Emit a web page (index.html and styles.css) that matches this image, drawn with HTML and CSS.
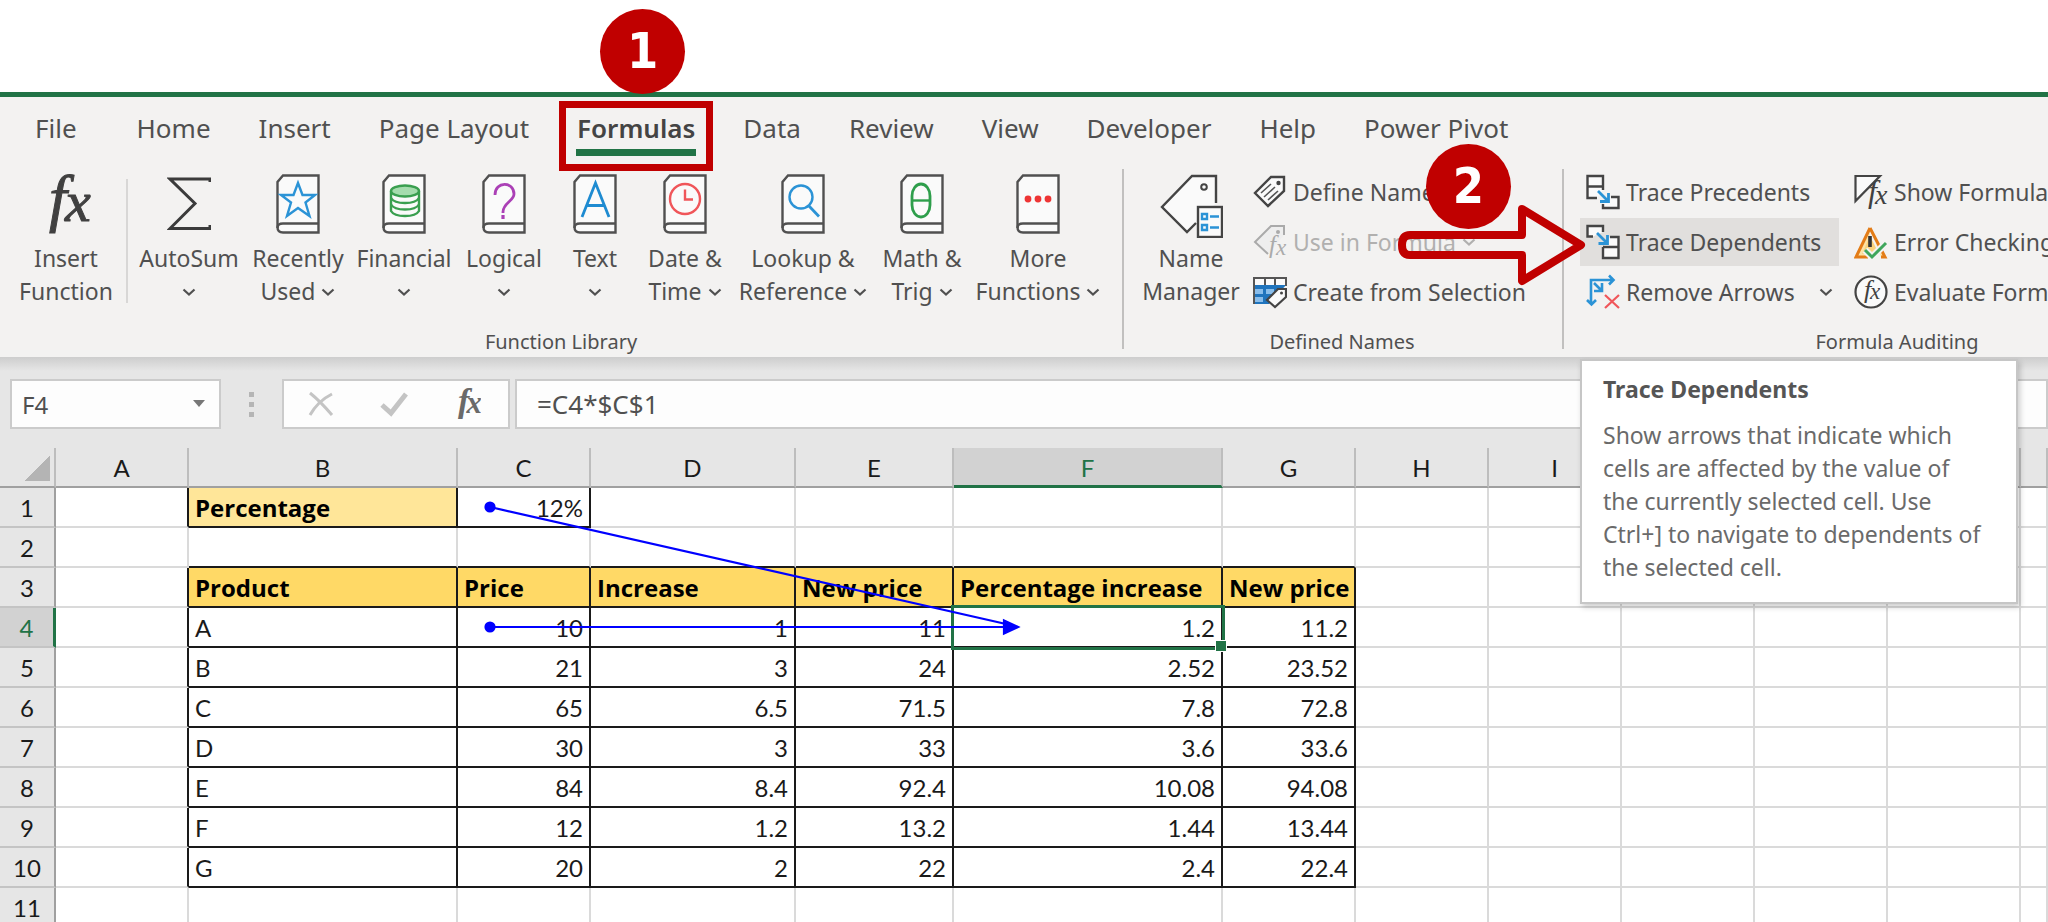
FILE: index.html
```html
<!DOCTYPE html>
<html lang="en">
<head>
    <meta charset="UTF-8">
    <meta name="viewport" content="width=device-width, initial-scale=1.0">
    <title>Trace Dependents</title>
    <link rel="stylesheet" href="styles.css">
</head>
<body>
    <!-- Shared icon shapes -->
    <svg class="defs" width="0" height="0" aria-hidden="true">
        <symbol id="book" viewBox="0 0 44 60">
            <path d="M7 1.500H42.500V58.500H7Q1.500 58.500 1.500 53V8Z" fill="#fafafa" stroke="#505050" stroke-width="2.400"/>
            <path d="M42 49.500H7Q1.500 49.500 1.500 54" fill="none" stroke="#505050" stroke-width="2.400"/>
        </symbol>
        <symbol id="chevron" viewBox="0 0 14 8">
            <path d="M1.500 1.500L7 6.500L12.500 1.500" fill="none" stroke="currentColor" stroke-width="2.200"/>
        </symbol>
        <symbol id="fx" viewBox="0 0 52 60">
            <text x="9" y="45" font-size="64">f</text>
            <text x="25" y="47" font-size="58">x</text>
        </symbol>
    </svg>

    <div class="title-space"></div>

    <!-- Ribbon -->
    <header class="ribbon">
        <nav class="tabs">
            <button class="tab file">File</button>
            <button class="tab">Home</button>
            <button class="tab">Insert</button>
            <button class="tab">Page Layout</button>
            <button class="tab active">Formulas<span class="frame"></span><span class="step step-one">1</span></button>
            <button class="tab">Data</button>
            <button class="tab">Review</button>
            <button class="tab">View</button>
            <button class="tab">Developer</button>
            <button class="tab">Help</button>
            <button class="tab">Power Pivot</button>
        </nav>

        <div class="groups">
            <section class="group library">
                <div class="tools">
                    <button class="big w-insert">
                        <svg class="fx" width="52" height="60"><use href="#fx"/></svg>
                        <span>Insert<br>Function</span>
                    </button>
                    <div class="divider"></div>
                    <button class="big w-wide">
                        <svg width="44" height="60" viewBox="0 0 44 60"><path d="M43 8V5H3L28 29.500L3 54.500H43V51" fill="none" stroke="#3b3b3b" stroke-width="3"/></svg>
                        <span>AutoSum<br><svg class="chev" width="14" height="8"><use href="#chevron"/></svg></span>
                    </button>
                    <button class="big w-recent">
                        <svg width="44" height="60" viewBox="0 0 44 60"><use href="#book"/><path d="M22 9L26.500 21H39L29.500 28.500L33.500 42L22 34L11 42L15 28.500L5 21H17.500Z" fill="none" stroke="#2b93d6" stroke-width="2.400"/></svg>
                        <span>Recently<br>Used <svg class="chev" width="14" height="8"><use href="#chevron"/></svg></span>
                    </button>
                    <button class="big w-financial">
                        <svg width="44" height="60" viewBox="0 0 44 60"><use href="#book"/><path d="M9 17V37Q12 42 23 42T37 37V17" fill="#fafafa" stroke="#3a9f50" stroke-width="2.400"/><ellipse cx="23" cy="17" rx="14" ry="5.500" fill="#a5dcae" stroke="#3a9f50" stroke-width="2.400"/><path d="M9 24Q12 29 23 29T37 24M9 30.500Q12 35.500 23 35.500T37 30.500" fill="none" stroke="#3a9f50" stroke-width="2.400"/></svg>
                        <span>Financial<br><svg class="chev" width="14" height="8"><use href="#chevron"/></svg></span>
                    </button>
                    <button class="big w-mid">
                        <svg width="44" height="60" viewBox="0 0 44 60"><use href="#book"/><path d="M13 21C13 7 32 7 32 20C32 27 21 29 21 38V39" fill="none" stroke="#ab40b6" stroke-width="2.800"/><path d="M21 41V45" stroke="#ab40b6" stroke-width="3.200"/></svg>
                        <span>Logical<br><svg class="chev" width="14" height="8"><use href="#chevron"/></svg></span>
                    </button>
                    <button class="big w-small">
                        <svg width="44" height="60" viewBox="0 0 44 60"><use href="#book"/><path d="M9 43L22.500 9L36 43M14 31.500H31" fill="none" stroke="#1e8bd1" stroke-width="2.800"/></svg>
                        <span>Text<br><svg class="chev" width="14" height="8"><use href="#chevron"/></svg></span>
                    </button>
                    <button class="big w-small">
                        <svg width="44" height="60" viewBox="0 0 44 60"><use href="#book"/><circle cx="22" cy="25" r="15" fill="none" stroke="#f0565a" stroke-width="2.400"/><path d="M22 15.500V25.500H30" fill="none" stroke="#f0565a" stroke-width="2.400"/></svg>
                        <span>Date &amp;<br>Time <svg class="chev" width="14" height="8"><use href="#chevron"/></svg></span>
                    </button>
                    <button class="big w-lookup">
                        <svg width="44" height="60" viewBox="0 0 44 60"><use href="#book"/><circle cx="20" cy="23" r="11.500" fill="none" stroke="#2b93d6" stroke-width="2.400"/><path d="M28 32L38 42.500" stroke="#2b93d6" stroke-width="2.800"/></svg>
                        <span>Lookup &amp;<br>Reference <svg class="chev" width="14" height="8"><use href="#chevron"/></svg></span>
                    </button>
                    <button class="big w-mid">
                        <svg width="44" height="60" viewBox="0 0 44 60"><use href="#book"/><rect x="12" y="10" width="18" height="33" rx="9" ry="12" fill="none" stroke="#2e9e4b" stroke-width="2.800"/><path d="M12 26.500H30" stroke="#2e9e4b" stroke-width="2.400"/></svg>
                        <span>Math &amp;<br>Trig <svg class="chev" width="14" height="8"><use href="#chevron"/></svg></span>
                    </button>
                    <button class="big w-more">
                        <svg width="44" height="60" viewBox="0 0 44 60"><use href="#book"/><g fill="#ee3535"><circle cx="12" cy="25" r="3.400"/><circle cx="22" cy="25" r="3.400"/><circle cx="32" cy="25" r="3.400"/></g></svg>
                        <span>More<br>Functions <svg class="chev" width="14" height="8"><use href="#chevron"/></svg></span>
                    </button>
                </div>
                <div class="group-name">Function Library</div>
            </section>

            <section class="group names">
                <div class="tools">
                    <button class="big w-manager">
                        <svg width="64" height="64" viewBox="0 0 64 64"><path d="M57 29V2H33L3 33L28 58L37 49" fill="#fafafa" stroke="#444" stroke-width="2.400"/><circle cx="45" cy="13" r="2.800" fill="none" stroke="#444" stroke-width="2"/><rect x="39" y="33" width="24" height="30" fill="#fafafa" stroke="#444" stroke-width="2.400"/><path d="M43 40h5v5h-5zM43 51h5v5h-5zM51 42.500h9M51 53.500h9" fill="none" stroke="#2b93d6" stroke-width="2.400"/></svg>
                        <span>Name<br>Manager</span>
                    </button>
                    <div class="stack">
                        <button class="small">
                            <svg width="34" height="34" viewBox="0 0 34 34"><path d="M18 2H31V16L15 31L2 18Z" fill="#fafafa" stroke="#444" stroke-width="2.400"/><circle cx="25.500" cy="8" r="2.200" fill="#444"/><path d="M8 18L18 9M11 22L22 12M15 25L25 16" stroke="#555" stroke-width="1.600"/></svg>
                            <span>Define Name</span>
                        </button>
                        <button class="small" disabled>
                            <svg class="fx" width="34" height="36" viewBox="0 0 34 36"><path d="M31 11V2H18L2 18L15 30" fill="#eee" stroke="#aaa" stroke-width="2"/><circle cx="25" cy="8" r="2" fill="#aaa"/><text x="16" y="29" font-size="25">f</text><text x="23" y="31" font-size="23">x</text></svg>
                            <span>Use in Formula</span>
                            <svg class="chev" width="14" height="8"><use href="#chevron"/></svg>
                        </button>
                        <button class="small">
                            <svg width="34" height="34" viewBox="0 0 34 34"><rect x="1" y="3" width="32" height="7" fill="#fafafa"/><path d="M1 10H33L16 29H1Z" fill="#1f74bd"/><path d="M2 14h8v5H2zM2 22h8v5H2zM13 14h8v5h-8z" fill="#89bdea"/><path d="M33 11V3H1V29M12 3V10M22 3V10" fill="none" stroke="#555" stroke-width="2"/><path d="M25 14H33V22L22 32L14 25Z" fill="#fafafa" stroke="#444" stroke-width="2.200"/><circle cx="28.500" cy="18" r="1.500" fill="#444"/></svg>
                            <span>Create from Selection</span>
                        </button>
                    </div>
                </div>
                <div class="group-name">Defined Names</div>
            </section>

            <section class="group auditing">
                <div class="tools">
                    <div class="stack trace">
                        <button class="small">
                            <svg width="34" height="36" viewBox="0 0 34 36"><path d="M11 24H1.500V2H17V16M1.500 12.500H17M25 23H32.500V34H17V30" fill="#fafafa" stroke="#444" stroke-width="2.400"/><path d="M12 17L22 27M14 27.500H22.500V19" fill="none" stroke="#2b93d6" stroke-width="2.800"/></svg>
                            <span>Trace Precedents</span>
                        </button>
                        <button class="small hover" aria-describedby="trace-tip">
                            <svg width="34" height="36" viewBox="0 0 34 36"><path d="M7 12.500H1.500V2H17V8" fill="#fafafa" stroke="#444" stroke-width="2.400"/><path d="M17 23V34H32.500V13H24M17 23H32.500" fill="#fafafa" stroke="#444" stroke-width="2.400"/><path d="M11 9L21 19M12.500 19.500H21.500V11" fill="none" stroke="#2b93d6" stroke-width="2.800"/></svg>
                            <span>Trace Dependents</span>
                            <svg class="pointer" width="190" height="84" viewBox="0 0 190 84"><path d="M14 32H126V6L185 42L126 78V52H14Q6 52 6 42T14 32Z" fill="none" stroke="#c00000" stroke-width="8" stroke-linejoin="round"/></svg>
                            <span class="step step-two">2</span>
                        </button>
                        <button class="small">
                            <svg width="34" height="36" viewBox="0 0 34 36"><path d="M5 30V6H27M8 9L15 16M8 17H16V9M1 26L5.500 30.500L10 26M23 1.500L27.500 6L23 10.500" fill="none" stroke="#2b93d6" stroke-width="2.600"/><path d="M19 21L33 34M33 21L19 34" stroke="#f0565a" stroke-width="2.200"/></svg>
                            <span>Remove Arrows</span>
                            <svg class="chev end" width="14" height="8"><use href="#chevron"/></svg>
                        </button>
                    </div>
                    <div class="stack">
                        <button class="small">
                            <svg class="fx" width="34" height="36" viewBox="0 0 34 36"><path d="M1.500 27V2H26Z" fill="#fafafa" stroke="#444" stroke-width="2.200"/><text x="14" y="28" font-size="32">f</text><text x="21" y="30" font-size="28">x</text></svg>
                            <span>Show Formulas</span>
                        </button>
                        <button class="small">
                            <svg width="34" height="36" viewBox="0 0 34 36"><path d="M16 4L2 33H14M27 33H31L16 4" fill="#fce3a6" stroke="#e37c17" stroke-width="3"/><path d="M16 12L8 30H25Z" fill="#fad27b"/><path d="M16 12V23" stroke="#333" stroke-width="3.600"/><path d="M11 26L18 33L32 19" fill="none" stroke="#f3f2f1" stroke-width="7"/><path d="M11 26L18 33L32 19" fill="none" stroke="#3fa65c" stroke-width="3"/></svg>
                            <span>Error Checking</span>
                            <svg class="chev" width="14" height="8"><use href="#chevron"/></svg>
                        </button>
                        <button class="small">
                            <svg class="fx" width="34" height="36" viewBox="0 0 34 36"><circle cx="17" cy="18" r="15.500" fill="#fafafa" stroke="#444" stroke-width="2.200"/><text x="10" y="24" font-size="26">f</text><text x="16" y="25" font-size="23">x</text></svg>
                            <span>Evaluate Formula</span>
                        </button>
                    </div>
                </div>
                <div class="group-name">Formula Auditing</div>
                <div class="tooltip" id="trace-tip" role="tooltip">
                    <strong>Trace Dependents</strong>
                    <p>Show arrows that indicate which cells are affected by the value of the currently selected cell. Use Ctrl+] to navigate to dependents of the selected cell.</p>
                </div>
            </section>
        </div>
    </header>

    <!-- Formula bar -->
    <div class="formula-bar">
        <div class="name-box">
            <input type="text" value="F4" aria-label="Name box">
            <button aria-label="Show names"><svg width="12" height="8" viewBox="0 0 12 8"><path d="M0 0H12L6 7Z" fill="#777"/></svg></button>
        </div>
        <div class="grip"><i></i><i></i><i></i></div>
        <div class="entry-buttons">
            <button aria-label="Cancel"><svg width="26" height="26" viewBox="0 0 26 26"><path d="M2 2Q12 10 24 24M24 3Q10 10 2 24" fill="none" stroke="#c4c4c4" stroke-width="3"/></svg></button>
            <button aria-label="Enter"><svg width="28" height="26" viewBox="0 0 28 26"><path d="M2 14L11 22L26 3" fill="none" stroke="#c4c4c4" stroke-width="5"/></svg></button>
            <button aria-label="Insert function"><svg class="fx" width="28" height="32" viewBox="0 0 52 60"><use href="#fx"/></svg></button>
        </div>
        <input class="formula" type="text" value="=C4*$C$1" aria-label="Formula">
    </div>

    <!-- Worksheet -->
    <main class="sheet">
        <table>
            <colgroup>
                <col class="c-head"><col class="c-std"><col class="c-wide"><col class="c-std"><col class="c-d"><col class="c-e"><col class="c-wide"><col class="c-std"><col class="c-std"><col class="c-std"><col class="c-std"><col class="c-std"><col class="c-std"><col>
            </colgroup>
            <thead>
                <tr><th class="corner"></th><th>A</th><th>B</th><th>C</th><th>D</th><th>E</th><th class="selected">F</th><th>G</th><th>H</th><th>I</th><th></th><th></th><th></th><th></th></tr>
            </thead>
            <tbody>
                <tr class="rate"><th>1</th><td></td><td class="label">Percentage</td><td>12%</td><td></td><td></td><td></td><td></td><td></td><td></td><td></td><td></td><td></td><td></td></tr>
                <tr class="spacer"><th>2</th><td></td><td></td><td></td><td></td><td></td><td></td><td></td><td></td><td></td><td></td><td></td><td></td><td></td></tr>
                <tr class="data titles"><th>3</th><td></td><td>Product</td><td>Price</td><td>Increase</td><td>New price</td><td>Percentage increase</td><td>New price</td><td></td><td></td><td></td><td></td><td></td><td></td></tr>
                <tr class="data"><th class="selected">4</th><td></td><td>A</td><td>10</td><td>1</td><td>11</td><td class="current">1.2<span class="selection"></span></td><td>11.2</td><td></td><td></td><td></td><td></td><td></td><td></td></tr>
                <tr class="data"><th>5</th><td></td><td>B</td><td>21</td><td>3</td><td>24</td><td>2.52</td><td>23.52</td><td></td><td></td><td></td><td></td><td></td><td></td></tr>
                <tr class="data"><th>6</th><td></td><td>C</td><td>65</td><td>6.5</td><td>71.5</td><td>7.8</td><td>72.8</td><td></td><td></td><td></td><td></td><td></td><td></td></tr>
                <tr class="data"><th>7</th><td></td><td>D</td><td>30</td><td>3</td><td>33</td><td>3.6</td><td>33.6</td><td></td><td></td><td></td><td></td><td></td><td></td></tr>
                <tr class="data"><th>8</th><td></td><td>E</td><td>84</td><td>8.4</td><td>92.4</td><td>10.08</td><td>94.08</td><td></td><td></td><td></td><td></td><td></td><td></td></tr>
                <tr class="data"><th>9</th><td></td><td>F</td><td>12</td><td>1.2</td><td>13.2</td><td>1.44</td><td>13.44</td><td></td><td></td><td></td><td></td><td></td><td></td></tr>
                <tr class="data"><th>10</th><td></td><td>G</td><td>20</td><td>2</td><td>22</td><td>2.4</td><td>22.4</td><td></td><td></td><td></td><td></td><td></td><td></td></tr>
                <tr><th>11</th><td></td><td></td><td></td><td></td><td></td><td></td><td></td><td></td><td></td><td></td><td></td><td></td><td></td></tr>
            </tbody>
        </table>
        <!-- Precedent arrows, C1 and C4 to F4 -->
        <svg class="arrows" width="1030" height="200" viewBox="0 0 1030 200">
            <g stroke="#0000ff" stroke-width="2.200" fill="#0000ff">
                <path d="M490 59L1006 176M490 179H1006"/>
                <circle cx="490" cy="59" r="4.500"/>
                <circle cx="490" cy="179" r="4.500"/>
                <path d="M1004 172.500L1018 179L1004 185.500Z"/>
            </g>
        </svg>
    </main>
</body>
</html>
```
FILE: styles.css
```css
* {
    box-sizing: border-box;
}

body {
    margin: 0;
    height: 100vh;
    overflow: hidden;
    display: flex;
    flex-direction: column;
    font-family: "Noto Sans", "Open Sans", sans-serif;
    background: #fff;
    color: #505050;
}

button, input {
    font: inherit;
    color: inherit;
    border: none;
    background: none;
    padding: 0;
    margin: 0;
}

.defs {
    display: none;
}

.fx {
    font-family: "Liberation Serif", serif;
    font-style: italic;
    fill: #404040;
}

.w-insert .fx {
    stroke: #404040;
    stroke-width: 1px;
}

.title-space {
    flex: none;
    height: 92px;
}

/* Ribbon */
.ribbon {
    flex: none;
    position: relative;
    z-index: 2;
    border-top: 5px solid #217346;
    background: #f3f2f1;
}

.tabs {
    display: flex;
    height: 70px;
    padding-left: 11px;
    font-size: 26px;
}

.tab {
    position: relative;
    padding: 0 24px 8px;
    white-space: nowrap;
}

.tab.file {
    margin-right: 12px;
}

.tab.active {
    font-weight: 600;
    color: #444;
}

.tab.active::after {
    content: "";
    position: absolute;
    left: 23px;
    right: 23px;
    bottom: 11px;
    height: 7px;
    background: #217346;
}

.frame {
    position: absolute;
    inset: 4px 6px -4px 6px;
    border: 7px solid #c00000;
}

.step {
    position: absolute;
    width: 85px;
    height: 85px;
    border-radius: 50%;
    background: #c00000;
    color: #fff;
    font: bold 50px/85px "DejaVu Sans Condensed", "DejaVu Sans", sans-serif;
    text-align: center;
}

.step-one {
    left: calc(50% - 42px);
    bottom: 73px;
    margin-left: 6px;
}

.step-two {
    right: calc(100% + 69px);
    bottom: 37px;
}

.groups {
    display: flex;
    height: 190px;
    font-size: 23px;
}

.group {
    position: relative;
    flex: none;
    display: flex;
    flex-direction: column;
}

.group + .group::before {
    content: "";
    position: absolute;
    left: 0;
    top: 2px;
    bottom: 8px;
    width: 2px;
    background: #c1c0bf;
}

.library {
    width: 1122px;
    padding-left: 8px;
}

.names {
    width: 440px;
    padding-left: 13px;
}

.auditing {
    width: 670px;
    padding-left: 18px;
}

.tools {
    flex: none;
    display: flex;
    height: 150px;
}

.group-name {
    font-size: 20px;
    line-height: 30px;
    padding-top: 10px;
    text-align: center;
}

.library .group-name {
    margin-left: -8px;
}

.names .group-name {
    margin-left: -13px;
}

.auditing .group-name {
    margin-left: -18px;
}

.big {
    display: flex;
    flex-direction: column;
    align-items: center;
    padding-top: 7px;
    line-height: 33px;
    white-space: nowrap;
}

.big > svg {
    flex: none;
    margin-bottom: 8px;
}

.w-manager > svg {
    margin-bottom: 4px;
}

.w-insert { width: 116px; }
.w-wide { width: 114px; }
.w-recent { width: 104px; }
.w-financial { width: 108px; }
.w-mid { width: 92px; }
.w-small { width: 90px; }
.w-lookup { width: 146px; }
.w-more { width: 140px; }
.w-manager { width: 112px; }

.chev {
    vertical-align: 4px;
}

.divider {
    width: 2px;
    height: 124px;
    margin: 12px 4px 0 2px;
    background: #d8d7d6;
}

.stack {
    display: flex;
    flex-direction: column;
}

.stack.trace {
    width: 259px;
    margin-right: 9px;
}

.small {
    position: relative;
    display: flex;
    align-items: center;
    gap: 6px;
    height: 48px;
    margin: 1px 0;
    padding: 0 6px;
    white-space: nowrap;
}

.small:disabled {
    color: #b1b0af;
}

.small:disabled .fx text {
    fill: #aaa;
}

.small.hover {
    background: #e1dfdd;
}

.small .end {
    margin-left: auto;
}

.pointer {
    position: absolute;
    right: calc(100% - 6px);
    top: -15px;
}

/* Tooltip */
.tooltip {
    position: absolute;
    top: calc(100% + 2px);
    left: 18px;
    width: 438px;
    height: 245px;
    padding: 12px 28px 12px 21px;
    border: 2px solid #c6c6c6;
    background: #fff;
    box-shadow: 2px 3px 6px rgba(0, 0, 0, 0.2);
    font-size: 23px;
    line-height: 33px;
    color: #6a6a6a;
}

.tooltip strong {
    color: #555;
}

.tooltip p {
    margin: 13px 0 0;
}

/* Formula bar */
.formula-bar {
    flex: none;
    display: flex;
    height: 91px;
    padding: 22px 0 19px 10px;
    background: linear-gradient(#cdcdcd, #e6e6e6 14px);
    font-size: 24px;
}

.name-box, .entry-buttons, .formula {
    border: 2px solid #cbcbcb;
    background: #fdfdfd;
}

.name-box {
    display: flex;
    width: 211px;
    padding: 0 14px 0 10px;
}

.name-box input {
    flex: 1;
    min-width: 0;
}

.name-box svg {
    display: block;
}

.grip {
    display: flex;
    flex-direction: column;
    justify-content: center;
    gap: 5px;
    width: 61px;
    padding-left: 28px;
}

.grip i {
    width: 5px;
    height: 5px;
    background: #b5b5b5;
}

.entry-buttons {
    display: flex;
    width: 228px;
    padding-right: 4px;
    margin-right: 5px;
}

.entry-buttons button {
    flex: 1;
    display: flex;
    align-items: center;
    justify-content: center;
}

.entry-buttons .fx {
    font-weight: bold;
    fill: #6a6a6a;
}

.formula {
    flex: 1;
    min-width: 0;
    padding-left: 20px;
    font-size: 26px;
}

/* Worksheet */
.sheet {
    flex: 1;
    position: relative;
    min-height: 0;
    overflow: hidden;
    font-family: Lato, "Open Sans", sans-serif;
    font-size: 24px;
    color: #1a1a1a;
}

table {
    width: 100%;
    table-layout: fixed;
    border-collapse: separate;
    border-spacing: 0;
}

.c-head { width: 56px; }
.c-std { width: 133px; }
.c-wide { width: 269px; }
.c-d { width: 205px; }
.c-e { width: 158px; }

th, td {
    height: 40px;
    padding: 2px 6px 0;
    line-height: 30px;
    white-space: nowrap;
}

td {
    border-right: 2px solid #dadada;
    border-bottom: 2px solid #dadada;
    text-align: right;
}

td:nth-child(3) {
    text-align: left;
}

th {
    padding: 2px 0 0;
    font-weight: normal;
    background: #e6e6e6;
    border-right: 2px solid #a0a0a0;
    border-bottom: 2px solid #c4c4c4;
}

thead th {
    border-right-color: #bdbdbd;
    border-bottom-color: #a0a0a0;
}

.corner {
    background: linear-gradient(135deg, transparent 50%, #b4b4b4 50%) 24px 7px / 26px 26px no-repeat #e6e6e6;
}

thead .selected {
    background: #d2d2d2;
    border-bottom: 3px solid #217346;
    color: #217346;
}

tbody .selected {
    background: #d2d2d2;
    border-right: 3px solid #217346;
    color: #217346;
}

.data td:nth-child(-n+8), .rate td:nth-child(-n+4) {
    border-right-color: #1a1a1a;
}

.data td:nth-child(n+3):nth-child(-n+8),
.spacer td:nth-child(n+3):nth-child(-n+8),
.rate td:nth-child(n+3):nth-child(-n+4) {
    border-bottom-color: #1a1a1a;
}

.titles td, .rate .label {
    text-align: left;
    font-family: "Open Sans", sans-serif;
    font-weight: bold;
    color: #000;
}

.titles td {
    padding-right: 0;
}

.titles td:nth-child(n+3):nth-child(-n+8) {
    background: #ffd966;
}

.rate .label {
    background: #ffe699;
}

.current {
    position: relative;
}

.selection {
    position: absolute;
    inset: -3px -4px -4px -3px;
    border: 3px solid #217346;
}

.selection::after {
    content: "";
    position: absolute;
    right: -5px;
    bottom: -5px;
    width: 10px;
    height: 10px;
    background: #217346;
    border: 1px solid #fff;
}

.arrows {
    position: absolute;
    left: 0;
    top: 0;
}
```
